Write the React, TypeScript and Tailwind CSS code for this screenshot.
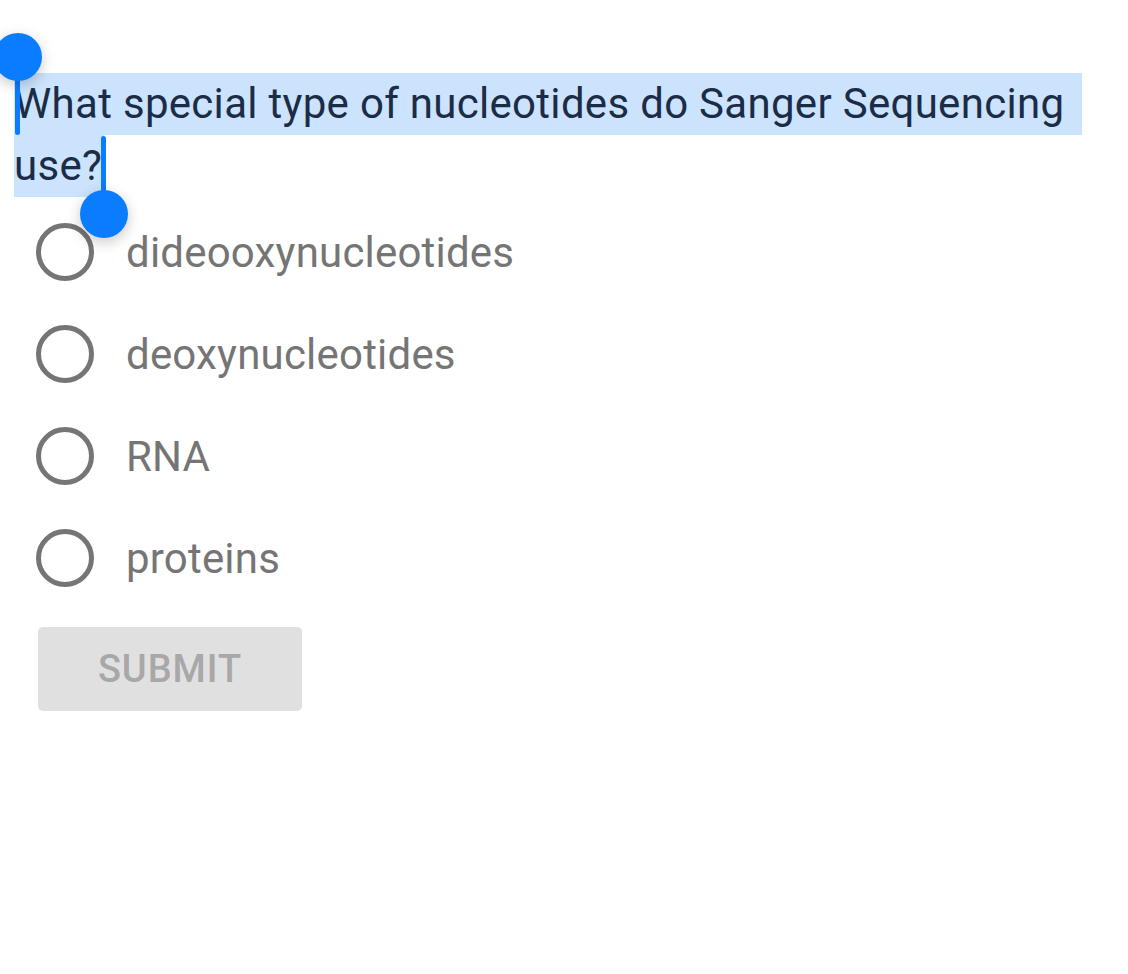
const options = ['dideooxynucleotides', 'deoxynucleotides', 'RNA', 'proteins'];

function Radio() {
  return <span className="w-[58px] h-[58px] rounded-full border-[5px] border-[#757575] shrink-0" />;
}

export default function App() {
  return (
    <div className="min-h-screen bg-white font-['Roboto',sans-serif] relative">
      <div className="pt-[73px]">
        {/* Question with text selection */}
        <div className="relative pl-[14px] text-[42px] leading-[62px] tracking-[0.3px] text-[#1b2c47]">
          <div className="w-[1068px] bg-[#cce3fd]">What special type of nucleotides do Sanger Sequencing</div>
          <div className="inline-block bg-[#cce3fd] pr-[2px]">use?</div>

          {/* selection handles */}
          <div className="absolute left-[15px] top-[-16px] w-[5px] h-[78px] bg-[#0a7cff] rounded-full" />
          <div className="absolute left-[-6px] top-[-40px] w-[48px] h-[48px] rounded-full bg-[#0a7cff] shadow-[0_4px_14px_rgba(0,0,0,0.22)]" />
          <div className="absolute left-[101px] top-[63px] w-[5px] h-[78px] bg-[#0a7cff] rounded-full" />
          <div className="absolute left-[80px] top-[117px] w-[48px] h-[48px] rounded-full bg-[#0a7cff] shadow-[0_4px_14px_rgba(0,0,0,0.22)]" />
        </div>

        {/* Options */}
        <div className="mt-[4px] pl-[36px]">
          {options.map((opt) => (
            <label key={opt} className="flex items-center gap-[32px] h-[102px]">
              <Radio />
              <span className="text-[42px] tracking-[0.2px] text-[#757575]">{opt}</span>
            </label>
          ))}
        </div>

        <button className="ml-[38px] mt-[18px] w-[264px] h-[84px] bg-[#e0e0e0] rounded-[5px] text-[38px] text-[#a8a8a8] font-medium tracking-wide">
          SUBMIT
        </button>
      </div>
    </div>
  );
}
